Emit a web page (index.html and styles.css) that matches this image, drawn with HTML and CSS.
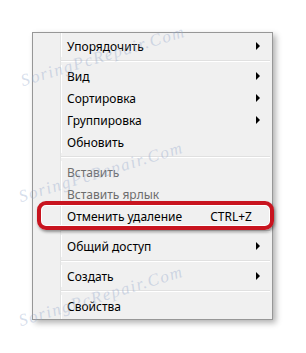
FILE: index.html
```html
<!DOCTYPE html>
<html lang="ru">
<head>
    <meta charset="UTF-8">
    <meta name="viewport" content="width=device-width, initial-scale=1.0">
    <title>Контекстное меню</title>
    <link rel="stylesheet" href="styles.css">
</head>
<body>
    <div class="menu">
        <div class="item">Упорядочить <span class="arrow"></span></div>
        <div class="sep"></div>
        <div class="item">Вид <span class="arrow"></span></div>
        <div class="item">Сортировка <span class="arrow"></span></div>
        <div class="item">Группировка <span class="arrow"></span></div>
        <div class="item">Обновить</div>
        <div class="sep"></div>
        <div class="item disabled">Вставить</div>
        <div class="item disabled">Вставить ярлык</div>
        <div class="item marked">Отменить удаление <span class="key">CTRL+Z</span></div>
        <div class="sep"></div>
        <div class="item">Общий доступ <span class="arrow"></span></div>
        <div class="sep"></div>
        <div class="item">Создать <span class="arrow"></span></div>
        <div class="sep"></div>
        <div class="item">Свойства</div>
    </div>

    <div class="mark mark-1">SoringPcRepair.Com</div>
    <div class="mark mark-2">SoringPcRepair.Com</div>
    <div class="mark mark-3">SoringPcRepair.Com</div>
</body>
</html>
```

FILE: styles.css
```css
body {
    margin: 0;
    padding: 32px 0 0 32px;
    background-color: #fff;
    font-family: "Segoe UI", "Noto Sans", Arial, sans-serif;
    font-size: 12px;
    color: #000;
    position: relative;
    height: 321px;
    overflow: hidden;
}
.menu {
    width: 239px;
    padding: 2px 0;
    border: 1px solid #979797;
    background: linear-gradient(to right, #f0f0f0 27px, #e2e3e3 27px, #e2e3e3 28px, #fff 28px, #fff 29px, #f0f0f0 29px);
    box-shadow: 3px 3px 6px rgba(0, 0, 0, 0.3);
}
.item {
    display: flex;
    align-items: center;
    height: 22px;
    padding: 0 12px 0 34px;
    position: relative;
}
.disabled {
    color: #6d6d6d;
}
.arrow {
    margin-left: auto;
    width: 0;
    height: 0;
    border-top: 4px solid transparent;
    border-bottom: 4px solid transparent;
    border-left: 4px solid #000;
}
.key {
    margin-left: auto;
    padding-right: 8px;
}
.sep {
    height: 8px;
    margin-left: 28px;
    margin-right: 2px;
    background: linear-gradient(#f0f0f0 3px, #e0e0e0 3px, #e0e0e0 4px, #fff 4px, #fff 5px, #f0f0f0 5px);
}
.marked::after {
    content: "";
    position: absolute;
    left: 4px;
    right: -2px;
    top: -4px;
    bottom: -3px;
    border: 4px solid #c8141f;
    border-radius: 9px;
    box-shadow: inset 0 0 0 1px #fff, 1px 2px 3px rgba(0, 0, 0, 0.4);
}
.mark {
    position: absolute;
    font-family: "Liberation Serif", serif;
    font-style: italic;
    font-size: 17px;
    line-height: 18px;
    letter-spacing: 1.5px;
    color: rgba(150, 170, 205, 0.4);
    transform: rotate(-17deg);
    transform-origin: left bottom;
    white-space: nowrap;
}
.mark-1 {
    left: 24px;
    top: 72px;
}
.mark-2 {
    left: 22px;
    top: 188px;
}
.mark-3 {
    left: 22px;
    top: 312px;
}
```
